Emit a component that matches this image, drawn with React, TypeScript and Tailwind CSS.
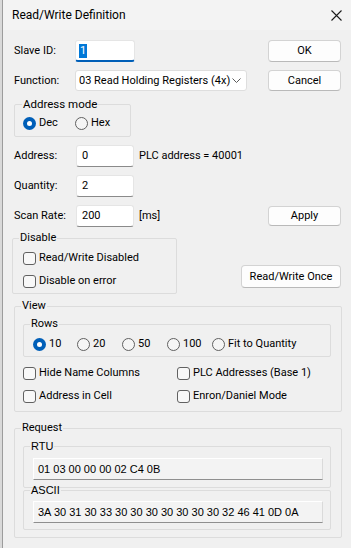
import React from 'react';

type Children = { children?: React.ReactNode };

const GroupBox: React.FC<Children & { title: string; className?: string; legendClass?: string }> = ({
  title,
  className = '',
  legendClass = 'text-[11px] leading-[16px]',
  children,
}) => (
  <fieldset className={`border border-[#dcdcdc] rounded-[2px] ${className}`}>
    <legend className={`px-[1px] ${legendClass}`}>{title}</legend>
    {children}
  </fieldset>
);

const Radio: React.FC<{ checked?: boolean; label: string; className?: string }> = ({ checked, label, className = '' }) => (
  <div className={`flex items-center gap-[3px] ${className}`}>
    {checked ? (
      <span className="w-[13px] h-[13px] rounded-full bg-[#005fb8] flex items-center justify-center">
        <span className="w-[5px] h-[5px] rounded-full bg-white" />
      </span>
    ) : (
      <span className="w-[13px] h-[13px] rounded-full border border-[#606060] bg-[#f5f5f5]" />
    )}
    <span>{label}</span>
  </div>
);

const Check: React.FC<{ label: string; className?: string }> = ({ label, className = '' }) => (
  <div className={`flex items-center gap-[3px] h-[16px] ${className}`}>
    <span className="w-[13px] h-[13px] rounded-[3px] border border-[#616161] bg-[#f8f8f8]" />
    <span>{label}</span>
  </div>
);

const Btn: React.FC<Children & { className?: string }> = ({ className = '', children }) => (
  <div
    className={`flex items-center justify-center bg-[#fdfdfd] border border-[#d3d3d3] border-b-[#b9b9b9] rounded-[4px] ${className}`}
  >
    {children}
  </div>
);

const TextBox: React.FC<Children & { className?: string }> = ({ className = '', children }) => (
  <div
    className={`flex items-center h-[22px] bg-white border border-[#e5e5e5] border-b-[#8a8a8a] rounded-[3px] pl-[5px] ${className}`}
  >
    {children}
  </div>
);

const HexField: React.FC<Children> = ({ children }) => (
  <div className="ml-[9px] w-[290px] h-[22px] flex items-center pl-[4px] bg-[#f3f3f3] border border-t-white border-l-white border-r-[#dadada] border-b-[#8f8f8f] font-['Liberation_Sans',sans-serif] text-[11px] text-black whitespace-nowrap">
    {children}
  </div>
);

export default function App() {
  return (
    <div className="w-[351px] h-[548px] flex bg-[#f0f0f0] text-[11px] leading-[16px] text-black font-['Roboto',sans-serif] overflow-hidden">
      <div className="w-[3px] h-full bg-[#d9d9d9] border-r border-[#9c9c9c]" />
      <div className="flex-1 flex flex-col">
        {/* title bar */}
        <div className="h-[30px] flex items-center justify-between pl-[9px] pr-[8px] bg-[#f3f3f3]">
          <span className="text-[12px]">Read/Write Definition</span>
          <svg width="11" height="11" viewBox="0 0 11 11" className="mr-[1px]">
            <path d="M0.5 0.5 L10.5 10.5 M10.5 0.5 L0.5 10.5" stroke="#1b1b1b" strokeWidth="1.1" />
          </svg>
        </div>

        <div className="pl-[11px] pr-[10px]">
          {/* slave id */}
          <div className="mt-[10px] flex items-center justify-between">
            <div className="flex items-center">
              <span className="w-[61px]">Slave ID:</span>
              <div className="w-[60px] h-[22px] flex items-center bg-white border border-[#e5e5e5] border-b-2 border-b-[#005fb8] rounded-[3px] pl-[3px]">
                <span className="bg-[#0078d7] text-white px-[1px] leading-[14px]">1</span>
              </div>
            </div>
            <Btn className="w-[73px] h-[22px] border-[#005fb8] border-b-[#005fb8]">OK</Btn>
          </div>

          {/* function */}
          <div className="mt-[8px] flex items-center justify-between">
            <div className="flex items-center">
              <span className="w-[61px]">Function:</span>
              <div className="w-[172px] h-[21px] flex items-center justify-between bg-white border border-[#dedede] rounded-[3px] pl-[3px] pr-[5px] whitespace-nowrap">
                <span>03 Read Holding Registers (4x)</span>
                <svg width="9" height="5" viewBox="0 0 9 5">
                  <path d="M0.5 0.5 L4.5 4.5 L8.5 0.5" fill="none" stroke="#5a5a5a" strokeWidth="1" />
                </svg>
              </div>
            </div>
            <Btn className="w-[73px] h-[21px]">Cancel</Btn>
          </div>

          {/* address mode */}
          <GroupBox
            title="Address mode"
            legendClass="-ml-[1px] text-[11.5px] leading-[16px]"
            className="mt-[5px] w-[117px] pl-[8px] pt-[4px] pb-[6px]"
          >
            <div className="flex items-center h-[14px]">
              <Radio checked label="Dec" className="w-[52px]" />
              <Radio label="Hex" />
            </div>
          </GroupBox>

          {/* address */}
          <div className="mt-[8px] flex items-center">
            <span className="w-[62px]">Address:</span>
            <TextBox className="w-[58px]">0</TextBox>
            <span className="ml-[5px]">PLC address = 40001</span>
          </div>
          <div className="mt-[8px] flex items-center">
            <span className="w-[62px]">Quantity:</span>
            <TextBox className="w-[58px]">2</TextBox>
          </div>
          <div className="mt-[8px] flex items-center">
            <span className="w-[62px]">Scan Rate:</span>
            <TextBox className="w-[58px]">200</TextBox>
            <span className="ml-[5px]">[ms]</span>
            <Btn className="ml-auto w-[73px] h-[20px]">Apply</Btn>
          </div>

          {/* disable */}
          <div className="mt-[3px] flex items-end justify-between">
            <GroupBox
              title="Disable"
              legendClass="-ml-[4px] text-[11px] leading-[16px]"
              className="-ml-[2px] w-[165px] pl-[10px] pt-[4px] pb-[4px]"
            >
              <Check label="Read/Write Disabled" />
              <Check label="Disable on error" className="mt-[7px]" />
            </GroupBox>
            <Btn className="mb-[6px] w-[100px] h-[23px]">Read/Write Once</Btn>
          </div>

          {/* view */}
          <GroupBox
            title="View"
            legendClass="-ml-[2px] text-[11px] leading-[16px]"
            className="mt-[4px] -mr-[1px] pl-[8px] pr-[10px] pb-[7px]"
          >
            <GroupBox
              title="Rows"
              legendClass="-ml-[3px] text-[11px] leading-[16px]"
              className="mt-[2px] pl-[9px] pt-[4px] pb-[4px]"
            >
              <div className="flex items-center h-[16px]">
                <Radio checked label="10" className="w-[44px]" />
                <Radio label="20" className="w-[45px]" />
                <Radio label="50" className="w-[45px]" />
                <Radio label="100" className="w-[45px]" />
                <Radio label="Fit to Quantity" />
              </div>
            </GroupBox>
            <div className="mt-[8px] grid grid-cols-[154px_1fr] gap-y-[7px]">
              <Check label="Hide Name Columns" />
              <Check label="PLC Addresses (Base 1)" />
              <Check label="Address in Cell" />
              <Check label="Enron/Daniel Mode" />
            </div>
          </GroupBox>

          {/* request */}
          <GroupBox
            title="Request"
            legendClass="-ml-[2px] text-[11px] leading-[16px]"
            className="mt-[8px] -mr-[1px] pl-[8px] pr-[10px] pb-[7px]"
          >
            <GroupBox
              title="RTU"
              legendClass="ml-[6px] font-['Liberation_Sans',sans-serif] text-[11px] leading-[12px]"
              className="mt-[4px] pt-[6px] pb-[7px]"
            >
              <HexField>01 03 00 00 00 02 C4 0B</HexField>
            </GroupBox>
            <GroupBox
              title="ASCII"
              legendClass="ml-[6px] font-['Liberation_Sans',sans-serif] text-[11px] leading-[12px]"
              className="-mt-[4px] pt-[5px] pb-[6px]"
            >
              <HexField>3A 30 31 30 33 30 30 30 30 30 30 30 32 46 41 0D 0A</HexField>
            </GroupBox>
          </GroupBox>
        </div>
      </div>
    </div>
  );
}
